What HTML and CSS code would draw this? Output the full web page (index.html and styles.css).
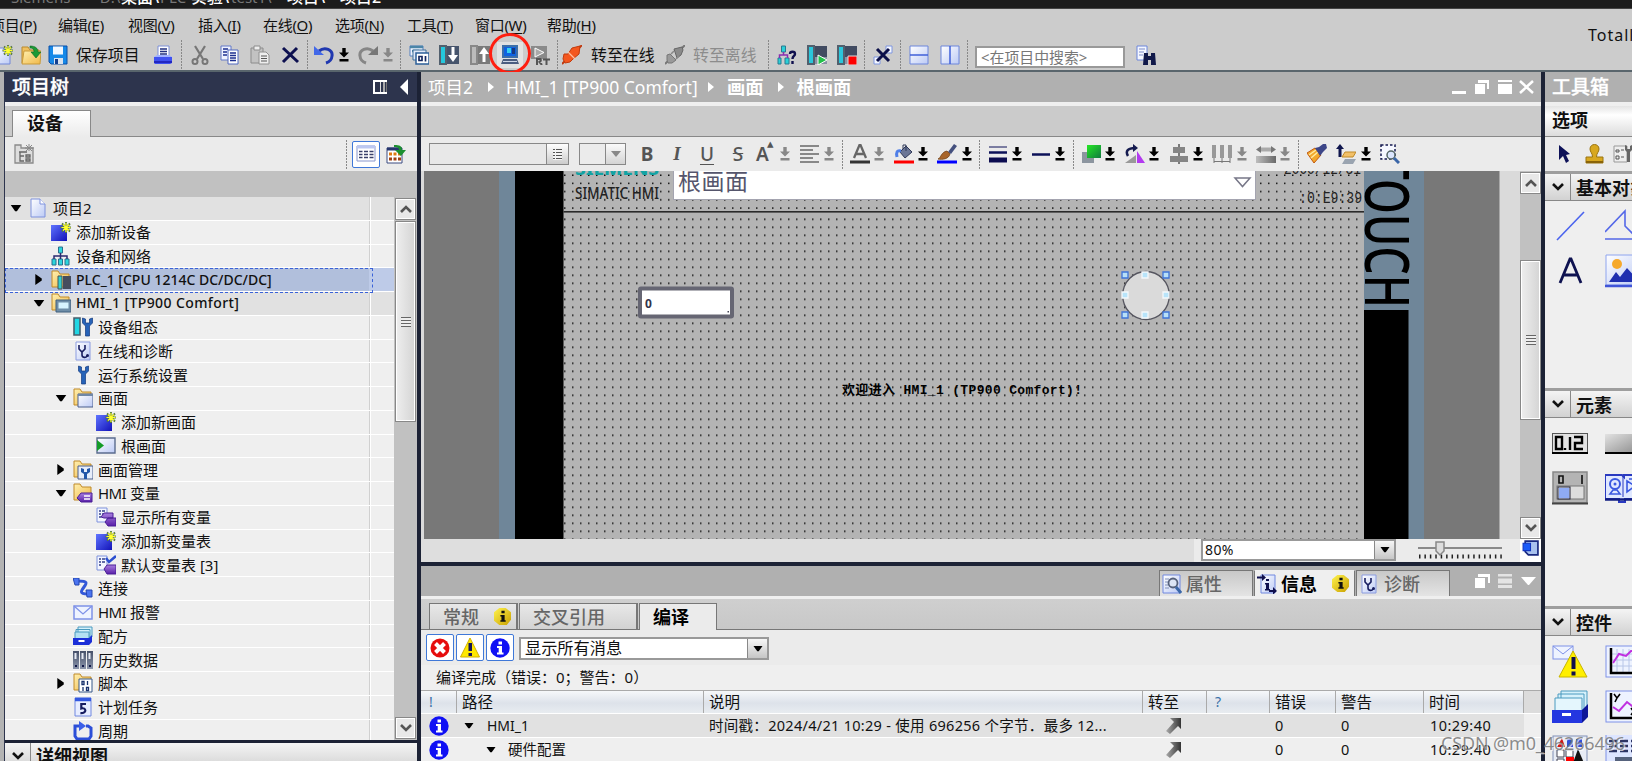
FILE: index.html
```html
<!DOCTYPE html>
<html lang="zh-CN">
<head>
<meta charset="utf-8">
<title>项目2</title>
<link rel="stylesheet" href="styles.css">
</head>
<body>
<svg class="sprite" width="0" height="0" aria-hidden="true">
<defs>
<linearGradient id="gBlue" x1="0" y1="0" x2="1" y2="1"><stop offset="0" stop-color="#5f74ff"/><stop offset="1" stop-color="#1212b8"/></linearGradient>
<linearGradient id="gPaper" x1="0" y1="0" x2="1" y2="1"><stop offset="0" stop-color="#fff"/><stop offset="1" stop-color="#bccaf5"/></linearGradient>
<linearGradient id="gFold" x1="0" y1="0" x2="1" y2="1"><stop offset="0" stop-color="#fff0b0"/><stop offset="1" stop-color="#f0b848"/></linearGradient>
<linearGradient id="gSteel" x1="0" y1="0" x2="0" y2="1"><stop offset="0" stop-color="#47516a"/><stop offset="1" stop-color="#8b95aa"/></linearGradient>
<linearGradient id="gGrey" x1="0" y1="0" x2="1" y2="1"><stop offset="0" stop-color="#e2e2e2"/><stop offset="1" stop-color="#8a8a8a"/></linearGradient>
<linearGradient id="gGreen" x1="0" y1="0" x2="1" y2="1"><stop offset="0" stop-color="#25e825"/><stop offset="1" stop-color="#127a40"/></linearGradient>
<linearGradient id="gPurple" x1="0" y1="0" x2="0" y2="1"><stop offset="0" stop-color="#a880e0"/><stop offset="1" stop-color="#5a1fa8"/></linearGradient>
<linearGradient id="gGold" x1="0" y1="0" x2="1" y2="1"><stop offset="0" stop-color="#fff34d"/><stop offset="1" stop-color="#c9a000"/></linearGradient>
<linearGradient id="gArrow" x1="0" y1="0" x2="1" y2="0"><stop offset="0" stop-color="#aaa"/><stop offset="1" stop-color="#333"/></linearGradient>
</defs>
<symbol id="spark" viewBox="0 0 20 20"><path d="M15 0v11M9.5 5.5h11M11 1.5l8 8M19 1.5l-8 8" stroke="#52763f" stroke-width="1.8"/><path d="M15 1v9M10.500 5.500h9M12 2.500l6 6M18 2.500l-6 6" stroke="#ffff30" stroke-width="1.200"/></symbol>
<symbol id="new" viewBox="0 0 20 20"><path d="M1 3h9l7 7v9H1z" fill="url(#gPaper)" stroke="#7388d8"/><use href="#spark"/></symbol>
<symbol id="open" viewBox="0 0 20 20"><path d="M1 2h6l2 3h9v13H1z" fill="#f0c060" stroke="#b98a2e"/><path d="M3 6h17l-1 13H1z" fill="url(#gFold)" stroke="#c99a3a"/><path d="M9 1c5 0 8 2 8 6h3l-5 6-5-6h3c0-3-1-4-4-4z" fill="#1d9a35" stroke="#0b6a22" stroke-width=".6"/></symbol>
<symbol id="save" viewBox="0 0 20 20"><path d="M1 1h18v18H3l-2-2z" fill="#1689e8" stroke="#0b4fa8"/><path d="M5 1.500h10v8H5z" fill="#f2f8ff"/><path d="M6 13h9v6H6z" fill="#d9e2ee"/><path d="M7 14h3v5H7z" fill="#123f90"/></symbol>
<symbol id="print" viewBox="0 0 20 20"><path d="M5 1h11v12H5z" fill="#fff" stroke="#7d90d8"/><path d="M7 4h7M7 6.500h7M7 9h7" stroke="#223080" stroke-width="1.300"/><path d="M1 12h18v6l-2 1H2l-1-1z" fill="#3f51f0"/><path d="M1 12l3-2h12l3 2z" fill="#9fb0ff"/><path d="M1 17h18" stroke="#1a1ab0" stroke-width="1.500"/></symbol>
<symbol id="cut" viewBox="0 0 20 20"><path d="M5 1l8 13M15 1L7 14" stroke="#777" stroke-width="2.200"/><circle cx="5" cy="16.500" r="2.500" fill="none" stroke="#777" stroke-width="2"/><circle cx="15" cy="16.500" r="2.500" fill="none" stroke="#777" stroke-width="2"/></symbol>
<symbol id="copy" viewBox="0 0 20 20"><path d="M1 1h10v14H1z" fill="#eef2ff" stroke="#6378c8"/><path d="M8 5h10v14H8z" fill="#fff" stroke="#5068c0"/><path d="M3 4h5M3 7h4M3 10h4M10 8h6M10 10.500h6M10 13h6M10 15.500h6" stroke="#1c2f90" stroke-width="1.300"/></symbol>
<symbol id="paste" viewBox="0 0 20 20"><path d="M1 3h12v15H1z" fill="#c2c2c2" stroke="#8c8c8c"/><path d="M4 1h6v4H4z" fill="#eee" stroke="#8c8c8c"/><path d="M9 7h7l3 3v9H9z" fill="#eee" stroke="#909090"/><path d="M11 11h6M11 13.500h6M11 16h6" stroke="#555" stroke-width="1.200"/></symbol>
<symbol id="del" viewBox="0 0 20 20"><path d="M3 3l15 14M17 3L3 17" stroke="#0d1050" stroke-width="3"/></symbol>
<symbol id="undo" viewBox="0 0 20 20"><path d="M5 6c6-5 14-1 13 5-.3 4-3 6-6 7" fill="none" stroke="#2038b0" stroke-width="3"/><path d="M0 1v9h10z" fill="#4268e8"/></symbol>
<symbol id="redo" viewBox="0 0 20 20"><path d="M15 6C9 1 1 5 2 11c.3 4 3 6 6 7" fill="none" stroke="#868686" stroke-width="3"/><path d="M20 1v9H10z" fill="#777"/></symbol>
<symbol id="dd" viewBox="0 0 10 14"><path d="M3.300 0h3.400v4.500H10L5 9.500 0 4.500h3.300zM0.500 11h9v2.500h-9z" fill="currentColor"/></symbol>
<symbol id="compile" viewBox="0 0 20 20"><path d="M1 1h13v10H1z" fill="#eef3ff" stroke="#5580c0"/><path d="M1 2h13M3 6h7" stroke="#4b86a8" stroke-width="2.500"/><path d="M4 5h13v10H4z" fill="#dfe8f8" stroke="#3f6f98"/><path d="M7 8h13v11H7z" fill="#fff" stroke="#2c5f98" stroke-width="1.500"/><path d="M10 11.500h3v4h-3zM16.500 11v5.500" fill="none" stroke="#142860" stroke-width="1.700"/></symbol>
<symbol id="dl" viewBox="0 0 20 20"><path d="M1 1h6v18H1z" fill="#24c8dd" stroke="#52606e" stroke-width="2"/><path d="M8 1h12v18H8z" fill="#46546c"/><path d="M14 2v10" stroke="#fff" stroke-width="3"/><path d="M9 10h10l-5 7z" fill="#fff"/></symbol>
<symbol id="ul" viewBox="0 0 20 20"><path d="M1 1h6v18H1z" fill="#bbb" stroke="#888" stroke-width="2"/><path d="M8 1h12v18H8z" fill="#7a7a7a"/><path d="M14 8v9" stroke="#fff" stroke-width="3"/><path d="M9 9h10l-5-7z" fill="#fff"/></symbol>
<symbol id="sim" viewBox="0 0 20 20"><path d="M2 0h16v13H2z" fill="#3d6fa8"/><path d="M4 2h12v9H4z" fill="#0f62e0"/><path d="M7 3h4v5H7z" fill="#37d0f0"/><path d="M12 3h3v6h-3z" fill="#173a80"/><path d="M3 14h14l2 5H1z" fill="#4b5d80"/><path d="M3 16.500h14" stroke="#cdd6e6"/></symbol>
<symbol id="rt" viewBox="0 0 20 20"><path d="M1 1h16v13H1z" fill="#8a8a8a"/><path d="M5 3l9 4.500L5 12z" fill="#aaa" stroke="#fff"/><path d="M7 20v-6h3.500q1 2-1 3l2.500 3M13 14.500h7M16.500 14v6" fill="none" stroke="#555" stroke-width="2"/></symbol>
<symbol id="plug" viewBox="0 0 20 20"><path d="M0 19l5-5M15 5l5-5" stroke="#c03a10" stroke-width="2"/><path d="M2 9l4 0 4-6 8-2-1 8-6 5-3 3-5 1-2-4z" fill="#f4571e" stroke="#c23a0c"/><path d="M6 7l7 7" stroke="#ffc0a0" stroke-width="1.300"/></symbol>
<symbol id="plugoff" viewBox="0 0 20 20"><path d="M0 19l4-4M15 5l5-5" stroke="#777" stroke-width="2"/><path d="M2 10l3-1 6 6-4 3H3l-1-3z" fill="#9a9a9a" stroke="#777"/><path d="M9 4l8-2 1 3-2 5-4 3z" fill="#8a8a8a" stroke="#666"/><path d="M6 9l3-3M11 14l3-3" stroke="#888" stroke-width="1.500"/></symbol>
<symbol id="diag" viewBox="0 0 20 20"><path d="M4.500 1h4v6h-4zM1 13h3v6H1zM8 13h4v6H8z" fill="#2bd0d8" stroke="#287a90"/><path d="M6.500 7v3M2.500 13v-3h8v3" stroke="#8a2fb0" fill="none" stroke-width="1.500"/><path d="M13 9c0-3 5-3 5 0 0 2-2.500 2-2.500 5M15.500 16v3" fill="none" stroke="#10104e" stroke-width="2.400"/></symbol>
<symbol id="cpu" viewBox="0 0 20 20"><path d="M1 1h6v18H1z" fill="#2bc6da" stroke="#52606e" stroke-width="2"/><path d="M8 1h12v18H8z" fill="#414b61"/><path d="M8 12h12v7H8z" fill="#8993a5"/></symbol>
<symbol id="start" viewBox="0 0 20 20"><use href="#cpu"/><path d="M11 10l9 5-9 5z" fill="#22c04a" stroke="#fff"/></symbol>
<symbol id="stop" viewBox="0 0 20 20"><use href="#cpu"/><path d="M11 11h9v9h-9z" fill="#f00" stroke="#ddd"/></symbol>
<symbol id="cross" viewBox="0 0 20 20"><path d="M13 1h6v7h-6zM1 12h6v7H1z" fill="#f4f7ff" stroke="#7f96e0"/><path d="M4 4l12 12M16 4L4 16" stroke="#0b0f48" stroke-width="3"/></symbol>
<symbol id="hs" viewBox="0 0 20 20"><path d="M1 1h18v18H1z" fill="url(#gPaper)" stroke="#6d86dc"/><path d="M1 10h18" stroke="#3f5fd8" stroke-width="1.500"/></symbol>
<symbol id="vs" viewBox="0 0 20 20"><path d="M1 1h18v18H1z" fill="url(#gPaper)" stroke="#6d86dc"/><path d="M10 1v18" stroke="#3f5fd8" stroke-width="1.500"/></symbol>
<symbol id="find" viewBox="0 0 20 20"><path d="M1 1h10v14H1z" fill="#f4f7ff" stroke="#6d86dc"/><path d="M3 4h6M3 7h5M3 10h4" stroke="#7a8ac8"/><path d="M8 8h4v3h3V8h4l1 12h-5v-5h-3v5H7z" fill="#11194a"/></symbol>
<symbol id="newgrey" viewBox="0 0 20 20"><path d="M1 4V1h6v3h12v15H1z" fill="#ddd" stroke="#8a8a8a" stroke-width="1.300"/><path d="M5 8h8M6 8v9h4M6 12h4M12 11h4v2h-4zM12 15h4v2h-4z" stroke="#666" stroke-width="1.300" fill="none"/><path d="M15 0v7M11 4h9M12 1l6 6M18 1l-6 6" stroke="#888"/></symbol>
<symbol id="list" viewBox="0 0 20 20"><path d="M1 2h18v15H1z" fill="#fff" stroke="#8896cc"/><path d="M1 3h18" stroke="#bcc8f2" stroke-width="3"/><path d="M3 7.500h3.500m1.500 0h4m1.500 0h4M3 10.500h3.500m1.500 0h4m1.500 0h4M3 13.500h3.500m1.500 0h4m1.500 0h4" stroke="#39406a" stroke-width="1.400"/></symbol>
<symbol id="cal" viewBox="0 0 20 20"><path d="M1 4h15v15H1z" fill="#fff" stroke="#3a4a80"/><path d="M1 5h15" stroke="#26366e" stroke-width="3"/><path d="M3 10h3m1.500 0h3m1.500 0h3" stroke="#e07a10" stroke-width="3"/><path d="M3 15h3m1.500 0h3m1.500 0h3" stroke="#a04010" stroke-width="3"/><path d="M8 1c6 0 8 1 8 5h4l-5 6-6-6h4c0-2-1-3-5-3z" fill="#1c9030"/></symbol>
<symbol id="page" viewBox="0 0 20 20"><path d="M3 1h9l5 5v13H3z" fill="url(#gPaper)" stroke="#7f92dd"/><path d="M12 1v5h5" fill="#fff" stroke="#7f92dd"/></symbol>
<symbol id="add" viewBox="0 0 20 20"><path d="M0 3h16v16H0z" fill="url(#gBlue)"/><use href="#spark"/></symbol>
<symbol id="net" viewBox="0 0 20 20"><path d="M7.500 1h4v6h-4zM1 13h4v6H1zM7.500 13h4v6h-4zM14 13h4v6h-4z" fill="#2bd6dc" stroke="#2a6f8c"/><path d="M9.500 7v6M3 13v-3h13v3" stroke="#2a2a70" fill="none" stroke-width="1.500"/></symbol>
<symbol id="fold" viewBox="0 0 20 20"><path d="M1 17V1h6l2 3h9v13z" fill="url(#gFold)" stroke="#c08a28"/></symbol>
<symbol id="plc" viewBox="0 0 20 20"><use href="#fold"/><path d="M7 6h4v13H7z" fill="#32cfd0" stroke="#455"/><path d="M12 6h8v13h-8z" fill="#454d5e"/></symbol>
<symbol id="hmi" viewBox="0 0 20 20"><use href="#fold"/><path d="M5 7h15v12H5z" fill="#6f8ea8" stroke="#41607e"/><path d="M7.500 9.500h10v6h-10z" fill="#d7f4ff"/></symbol>
<symbol id="wrench" viewBox="0 0 20 20"><path d="M5.500 1v5l3 3v10h4V9l3-3V1l-3 1v4h-4V2z" fill="#2763b8" stroke="#123a80" stroke-width=".7"/></symbol>
<symbol id="cfg" viewBox="0 0 20 20"><path d="M1 1h6v17H1z" fill="#20d6e4" stroke="#47606e" stroke-width="1.600"/><use href="#wrench" x="4"/></symbol>
<symbol id="steth" viewBox="0 0 20 20"><path d="M3 1h14v18H3z" fill="url(#gPaper)" stroke="#8b9ce0"/><path d="M6 4v4l3 3 3-3V4M9 11v3c0 3 4 3 5 1" fill="none" stroke="#171d60" stroke-width="1.600"/><circle cx="14.500" cy="14.500" r="1.500" fill="#171d60"/></symbol>
<symbol id="fscr" viewBox="0 0 20 20"><use href="#fold"/><path d="M5 6h15v13H5z" fill="url(#gPaper)" stroke="#4a5f8c"/><path d="M5 7h15" stroke="#7088a8" stroke-width="2"/></symbol>
<symbol id="root" viewBox="0 0 20 20"><path d="M1 2h18v15H1z" fill="url(#gPaper)" stroke="#5b6c8e" stroke-width="1.400"/><path d="M1 4l7 5.500L1 15z" fill="#149c28"/></symbol>
<symbol id="fwr" viewBox="0 0 20 20"><use href="#fold"/><path d="M5 6h15v13H5z" fill="#e6edfb" stroke="#4a5f8c"/><path d="M8 8v4l3 2v5h3v-5l3-2V8l-3 1v3h-3V9z" fill="#2155a8"/></symbol>
<symbol id="ftag" viewBox="0 0 20 20"><use href="#fold"/><path d="M4 15l4-5h11v9H8z" fill="url(#gPurple)" stroke="#4b1f96"/><path d="M11 13h6M11 16h6" stroke="#fff" stroke-width="1.400"/></symbol>
<symbol id="tags" viewBox="0 0 20 20"><path d="M1 1h10v14H1z" fill="#f3f6ff" stroke="#7f92dd"/><path d="M3 4h2m1 0h3M3 7h2m1 0h3M3 10h2" stroke="#35408a" stroke-width="1.400"/><path d="M5 10l3-4h9v5H8zM9 15l3-4h8v8h-8z" fill="url(#gPurple)" stroke="#4b1f96"/></symbol>
<symbol id="tagc" viewBox="0 0 20 20"><path d="M1 1h10v14H1z" fill="#f3f6ff" stroke="#7f92dd"/><path d="M3 4h2m1 0h3M3 7h2m1 0h3M3 10h2" stroke="#35408a" stroke-width="1.400"/><path d="M10 3l3 4 7-6" fill="none" stroke="#2b4fd0" stroke-width="2.500"/><path d="M8 14l3-4h9v9h-9z" fill="url(#gPurple)" stroke="#4b1f96"/></symbol>
<symbol id="conn" viewBox="0 0 20 20"><path d="M5 3c10 0 9 2 6 6s-5 7 4 7" fill="none" stroke="#3358d8" stroke-width="3"/><path d="M0 0h6v7H2zM13 12h6v7h-5z" fill="#4b74f0" stroke="#2546b0"/></symbol>
<symbol id="mail" viewBox="0 0 20 20"><path d="M1 4h18v13H1z" fill="#eef3ff" stroke="#7f92e8" stroke-width="1.500"/><path d="M1 4l9 8 9-8" fill="none" stroke="#7f92e8" stroke-width="1.300"/></symbol>
<symbol id="recipe" viewBox="0 0 20 20"><path d="M5 1h14v10H5zM3 3.500h14V13H3z" fill="#d6f1fb" stroke="#4a9abf"/><path d="M2 6h14v7H2z" fill="#b4e0f2" stroke="#4a9abf"/><path d="M0 12h16l3-3v7l-3 3H0z" fill="#1c2fd8"/><path d="M5.500 14h6v2h-6z" fill="#fff"/></symbol>
<symbol id="hist" viewBox="0 0 20 20"><path d="M0 1h6v18H0zM7 1h6v18H7zM14 1h6v18h-6z" fill="url(#gSteel)"/><path d="M1.500 3h2v6h-2zM8.500 3h2v6h-2zM15.500 3h2v6h-2z" fill="#e7ebf5"/><path d="M2 15h2v2H2zM9 15h2v2H9zM16 15h2v2h-2z" fill="#111848"/></symbol>
<symbol id="script" viewBox="0 0 20 20"><use href="#fold"/><path d="M6 6h13v13H6z" fill="#fff" stroke="#36598a"/><path d="M9 8.500h2v3H9zM14.500 8v4M10 14v4M13.500 14.500h2v3h-2z" fill="none" stroke="#17306a" stroke-width="1.300"/></symbol>
<symbol id="task" viewBox="0 0 20 20"><path d="M2 1h16v18H2z" fill="#e7edff" stroke="#7088e0"/><path d="M2 2.500h16" stroke="#3358e0" stroke-width="3.500"/><path d="M13 7H8.300v4.500c5-1.500 6 5-.9 4.600" fill="none" stroke="#171d60" stroke-width="2.200"/></symbol>
<symbol id="cycle" viewBox="0 0 20 20"><path d="M6 5H2v10l2 3h12l2-3V7l-3-2h-2" fill="none" stroke="#2c4fd8" stroke-width="3"/><path d="M6 0l7 5-7 5z" fill="#3b5fe8"/></symbol>
<symbol id="info" viewBox="0 0 20 20"><circle cx="10" cy="10" r="9.700" fill="#1010f4"/><path d="M8.500 3.500h3.500v3H8.500zM7 8h5v6.500h1.500v2H7v-2h1.700V10H7z" fill="#fff"/></symbol>
<symbol id="err" viewBox="0 0 20 20"><circle cx="10" cy="10" r="9.500" fill="#e60d0d"/><path d="M5.500 5.500l9 9M14.500 5.500l-9 9" stroke="#fff" stroke-width="4"/></symbol>
<symbol id="warn" viewBox="0 0 20 20"><path d="M10 0l9.500 19H.5z" fill="#ffe800" stroke="#d0b000"/><path d="M8.500 5h3.500v8H8.500zM8.500 15h3.500v3H8.500z" fill="#14145a"/></symbol>
<symbol id="yinfo" viewBox="0 0 16 16"><path d="M5 0h6l5 4v7l-4 5H5l-5-4V4z" fill="url(#gGold)"/><path d="M7 2.500h3v2.500H7zM6 6.500h4v5h1v1.500H6v-1.500h1V8H6z" fill="#111"/></symbol>
<symbol id="goto" viewBox="0 0 16 16"><path d="M5 0h11v11l-3-3-8 8-4-3 8-9z" fill="url(#gArrow)"/></symbol>
<symbol id="align" viewBox="0 0 20 20"><path d="M0 2h19M0 6h13M0 10h19M0 14h13M0 18h19" stroke="#888" stroke-width="2"/></symbol>
<symbol id="fontc" viewBox="0 0 20 20"><path d="M4 14l5.500-13h1L16 14M6 10h8" fill="none" stroke="#666" stroke-width="2.300"/><path d="M0 16.500h20v3H0z" fill="#333"/></symbol>
<symbol id="fill" viewBox="0 0 20 20"><path d="M6 8l6-6 6 6-7 6z" fill="#6b7696" stroke="#2f3858"/><path d="M9 5V1h3v6" fill="none" stroke="#2f3858"/><path d="M7 7C3 6 2 8 3 13" fill="none" stroke="#4f7fe8" stroke-width="3"/><path d="M0 16.500h20v3H0z" fill="red"/></symbol>
<symbol id="brush" viewBox="0 0 20 20"><path d="M11 8l6-8 3 2-6 8z" fill="#44507e"/><path d="M1 15c3-1 3-7 9-8l3 3c-1 5-8 6-12 5z" fill="#a8652a" stroke="#6a3a10" stroke-width=".7"/><path d="M0 16.500h20v3H0z" fill="#00f"/></symbol>
<symbol id="lines" viewBox="0 0 20 20"><path d="M1 3h18" stroke="#0c1158"/><path d="M1 8.500h18" stroke="#0c1158" stroke-width="2.500"/><path d="M1 16h18" stroke="#0c0c50" stroke-width="5"/></symbol>
<symbol id="line1" viewBox="0 0 20 20"><path d="M1 10.500h18" stroke="#0c1158" stroke-width="2.500"/></symbol>
<symbol id="layers" viewBox="0 0 20 20"><path d="M0 8h12v11H0z" fill="#8c959f"/><path d="M5 1h14v13H5z" fill="url(#gGreen)"/></symbol>
<symbol id="rot" viewBox="0 0 20 20"><path d="M0 19l11-8v8z" fill="#999"/><path d="M12 19V7l8 12z" fill="#b33af0"/><path d="M3 12C0 7 3 4 10 4" fill="none" stroke="#161c50" stroke-width="2.500"/><path d="M8 0l5 4-5 4z" fill="#161c50"/></symbol>
<symbol id="alc" viewBox="0 0 20 20"><path d="M10 0v20" stroke="#555" stroke-width="1.500"/><path d="M4 3h12v6H4zM1 12h18v6H1z" fill="#858585"/></symbol>
<symbol id="dist" viewBox="0 0 20 20"><path d="M0 1h4v13H0zM8 1h4v13H8zM16 1h4v13h-4z" fill="#999"/><path d="M2 14v5m8-5v5m8-5v5M2 17.500h16" stroke="#777" fill="none"/></symbol>
<symbol id="wid" viewBox="0 0 20 20"><path d="M0 12h20v7H0z" fill="url(#gArrow)" opacity=".7"/><path d="M5 5.500h10" stroke="#aaa" stroke-width="4"/><path d="M0 5.500L5 2v7zM20 5.500L15 2v7z" fill="#777"/></symbol>
<symbol id="broom" viewBox="0 0 20 20"><path d="M0 9l8-5 6 7-7 8z" fill="#f3a82c" stroke="#c25a10"/><path d="M2 11l7-5M4 14l7-6" stroke="#ffeaa0" stroke-width="1.500"/><path d="M8 4l4-1 4-3h3l1 4-4 4-3 4z" fill="#3d4688"/></symbol>
<symbol id="lay2" viewBox="0 0 20 20"><path d="M4 13V3" stroke="#10164e" stroke-width="3"/><path d="M0 5l4-5 4 5z" fill="#10164e"/><path d="M9 8h11l-3 5H6z" fill="#f2c068" stroke="#c08a28"/><path d="M9 15h11l-3 5H6z" fill="#9aa4b0"/></symbol>
<symbol id="zoomsel" viewBox="0 0 20 20"><path d="M1 1h14v14H1z" fill="#f5f7ff" stroke="#141a50" stroke-width="1.500" stroke-dasharray="2.500 2"/><circle cx="11" cy="11" r="4" fill="#dbe6ff" stroke="#566" stroke-width="1.500"/><path d="M14 14l5 5" stroke="#3a66a8" stroke-width="3"/></symbol>
<symbol id="cursor" viewBox="0 0 20 20"><path d="M5 1l11 9-4 1 3 6-3 2-3-7-4 4z" fill="#0d1158"/></symbol>
<symbol id="stamp" viewBox="0 0 20 20"><path d="M6 5c0-6 9-6 9 0 0 3-2.500 4-2.500 8H19v6H2v-6h6.500C8.500 9 6 8 6 5z" fill="#d8a820" stroke="#9a7410"/><path d="M2 18h17" stroke="#8a6408" stroke-width="2"/></symbol>
<symbol id="toolg" viewBox="0 0 20 20"><path d="M1 2h13v16H1z" fill="#eee" stroke="#999"/><path d="M3 6h3v2H3zM3 12h3v3H3zM8 6h3M8 13h3" stroke="#555" fill="none"/><path d="M12 1v5l2 2v10h3V8l2-2V1l-2 1v3h-3V2z" fill="#666"/></symbol>
<symbol id="prop" viewBox="0 0 20 20"><path d="M1 1h17v18H1z" fill="url(#gPaper)" stroke="#7088e0"/><path d="M3 5h4M3 8h3M3 11h3M3 14h4" stroke="#8090b8"/><circle cx="11" cy="9" r="4.500" fill="#dce4f5" stroke="#55607a" stroke-width="1.800"/><path d="M14 13l5 6" stroke="#3a66a8" stroke-width="3"/></symbol>
<symbol id="inf2" viewBox="0 0 20 20"><path d="M4 1h14v18H4z" fill="url(#gPaper)" stroke="#7088e0"/><path d="M9 5h3v2H9zM8 9h4v6h1v1.500H8V15h1v-4.500H8z" fill="#10104e"/><path d="M0 3.500h6M12 17h7" stroke="#10104e" stroke-width="2"/><path d="M5 0l4 3.500L5 7zM16 13l4 4-4 3.500z" fill="#10104e"/></symbol>
<symbol id="tri-d" viewBox="0 0 12 8"><path d="M0 0h12L7 7H5z" fill="#000"/></symbol>
<symbol id="tri-r" viewBox="0 0 8 12"><path d="M0 0v12l7-5V5z" fill="#000"/></symbol>
<symbol id="chev" viewBox="0 0 12 8"><path d="M1 1l5 5 5-5" fill="none" stroke="currentColor" stroke-width="2.600"/></symbol>
</svg>

<div class="app">
  <div class="titlebar"><span class="dim">Siemens</span><span class="dim dash">- D:\</span><span class="t0">桌面\</span><span class="dim t1">PLC</span><span class="t2">实验\</span><span class="dim t3">test1\</span><span class="t4">项目\</span><span>项目2</span></div>

  <header class="top">
    <nav class="menu">
      <span>项目(<u>P</u>)</span><span>编辑(<u>E</u>)</span><span>视图(<u>V</u>)</span><span>插入(<u>I</u>)</span><span>在线(<u>O</u>)</span><span>选项(<u>N</u>)</span><span>工具(<u>T</u>)</span><span>窗口(<u>W</u>)</span><span>帮助(<u>H</u>)</span>
    </nav>
    <div class="brand">Totally</div>
    <div class="bar main">
      <svg class="ic first"><use href="#new"/></svg><svg class="ic m8"><use href="#open"/></svg><svg class="ic m7"><use href="#save"/></svg><span class="lbl save m8">保存项目</span><svg class="ic m8"><use href="#print"/></svg><i class="sep m8"></i><svg class="ic m8"><use href="#cut"/></svg><svg class="ic m10"><use href="#copy"/></svg><svg class="ic m10"><use href="#paste"/></svg><svg class="ic m10"><use href="#del"/></svg><i class="sep m7"></i><svg class="ic m6"><use href="#undo"/></svg><svg class="dd m5"><use href="#dd"/></svg><svg class="ic m9"><use href="#redo"/></svg><svg class="dd off m5"><use href="#dd"/></svg><i class="sep m7"></i><svg class="ic m8"><use href="#compile"/></svg><svg class="ic m10"><use href="#dl"/></svg><svg class="ic m11"><use href="#ul"/></svg><span class="hot m10"><svg class="ic"><use href="#sim"/></svg><i class="ring"></i></span><svg class="ic m10"><use href="#rt"/></svg><i class="sep m7"></i><svg class="ic m4"><use href="#plug"/></svg><span class="lbl on m9">转至在线</span><svg class="ic m10"><use href="#plugoff"/></svg><span class="lbl offl m8">转至离线</span><i class="sep m10"></i><svg class="ic m8"><use href="#diag"/></svg><svg class="ic m10"><use href="#start"/></svg><svg class="ic m10"><use href="#stop"/></svg><i class="sep m7"></i><svg class="ic m8"><use href="#cross"/></svg><i class="sep m7"></i><svg class="ic m8"><use href="#hs"/></svg><svg class="ic m11"><use href="#vs"/></svg><i class="sep m7"></i><span class="search m7">&lt;在项目中搜索&gt;</span><svg class="ic m11"><use href="#find"/></svg>
    </div>
  </header>

  <main class="work">
    <div class="edge"></div>

    <aside class="tree-panel">
      <div class="phead navy"><b>项目树</b><span class="pcol"></span><span class="pleft"></span></div>
      <div class="hl"></div>
      <div class="tabs"><span class="tab">设备</span></div>
      <div class="bar sub"><svg class="ic m9"><use href="#newgrey"/></svg><i class="sep push"></i><span class="frame"><svg class="ic"><use href="#list"/></svg></span><svg class="ic m6"><use href="#cal"/></svg></div>
      <div class="blank"></div>
      <div class="treebox">
        <div class="tree">
          <div class="row l0 hd"><div><svg class="ar d"><use href="#tri-d"/></svg><svg class="ic"><use href="#page"/></svg><span>项目2</span></div></div>
          <div class="row l1"><div><i class="ar"></i><svg class="ic"><use href="#add"/></svg><span>添加新设备</span></div></div>
          <div class="row l1"><div><i class="ar"></i><svg class="ic"><use href="#net"/></svg><span>设备和网络</span></div></div>
          <div class="row l1 sel"><div><svg class="ar r"><use href="#tri-r"/></svg><svg class="ic"><use href="#plc"/></svg><span class="en plc">PLC_1 [CPU 1214C DC/DC/DC]</span></div></div>
          <div class="row l1 hd"><div><svg class="ar d"><use href="#tri-d"/></svg><svg class="ic"><use href="#hmi"/></svg><span class="en hmi">HMI_1 [TP900 Comfort]</span></div></div>
          <div class="row l2"><div><i class="ar"></i><svg class="ic"><use href="#cfg"/></svg><span>设备组态</span></div></div>
          <div class="row l2"><div><i class="ar"></i><svg class="ic"><use href="#steth"/></svg><span>在线和诊断</span></div></div>
          <div class="row l2"><div><i class="ar"></i><svg class="ic"><use href="#wrench"/></svg><span>运行系统设置</span></div></div>
          <div class="row l2"><div><svg class="ar d"><use href="#tri-d"/></svg><svg class="ic"><use href="#fscr"/></svg><span>画面</span></div></div>
          <div class="row l3"><div><i class="ar"></i><svg class="ic"><use href="#add"/></svg><span>添加新画面</span></div></div>
          <div class="row l3"><div><i class="ar"></i><svg class="ic"><use href="#root"/></svg><span>根画面</span></div></div>
          <div class="row l2"><div><svg class="ar r"><use href="#tri-r"/></svg><svg class="ic"><use href="#fwr"/></svg><span>画面管理</span></div></div>
          <div class="row l2"><div><svg class="ar d"><use href="#tri-d"/></svg><svg class="ic"><use href="#ftag"/></svg><span><em>HMI</em> 变量</span></div></div>
          <div class="row l3"><div><i class="ar"></i><svg class="ic"><use href="#tags"/></svg><span>显示所有变量</span></div></div>
          <div class="row l3"><div><i class="ar"></i><svg class="ic"><use href="#add"/></svg><span>添加新变量表</span></div></div>
          <div class="row l3"><div><i class="ar"></i><svg class="ic"><use href="#tagc"/></svg><span>默认变量表 [3]</span></div></div>
          <div class="row l2"><div><i class="ar"></i><svg class="ic"><use href="#conn"/></svg><span>连接</span></div></div>
          <div class="row l2"><div><i class="ar"></i><svg class="ic"><use href="#mail"/></svg><span><em>HMI</em> 报警</span></div></div>
          <div class="row l2"><div><i class="ar"></i><svg class="ic"><use href="#recipe"/></svg><span>配方</span></div></div>
          <div class="row l2"><div><i class="ar"></i><svg class="ic"><use href="#hist"/></svg><span>历史数据</span></div></div>
          <div class="row l2"><div><svg class="ar r"><use href="#tri-r"/></svg><svg class="ic"><use href="#script"/></svg><span>脚本</span></div></div>
          <div class="row l2"><div><i class="ar"></i><svg class="ic"><use href="#task"/></svg><span>计划任务</span></div></div>
          <div class="row l2"><div><i class="ar"></i><svg class="ic"><use href="#cycle"/></svg><span>周期</span></div></div>
        </div>
        <div class="sb sb-tree"><span class="sbtn"><svg class="chev up"><use href="#chev"/></svg></span><span class="thumb"><i></i></span><span class="sbtn end"><svg class="chev"><use href="#chev"/></svg></span></div>
      </div>
      <div class="dark3"></div>
      <div class="sect detail"><span class="sx"><svg class="chev"><use href="#chev"/></svg></span><b>详细视图</b></div>
    </aside>

    <div class="vdark"></div>

    <section class="center">
      <div class="phead grey crumbs"><span class="c1">项目2</span><i></i><span class="c2">HMI_1 [TP900 Comfort]</span><i></i><span class="c3">画面</span><i></i><span class="c3">根画面</span>
        <svg class="winbtn" viewBox="0 0 84 16"><path d="M0 12h14v3H0z" fill="#fff"/><path d="M23 5h10v10H23zM26 1h11v9h-2V4h-9z" fill="#fff"/><path d="M46 1h14v2H46zM46 5h14v10H46z" fill="#fff"/><path d="M68 2l13 12M81 2L68 14" stroke="#fff" stroke-width="2.500"/></svg>
      </div>
      <div class="hl"></div>
      <div class="strip"></div>
      <div class="bar fmt">
        <span class="fcombo m8"><i></i></span><span class="scombo m10"><i></i></span><b class="g m11">B</b><b class="g it m10">I</b><b class="g un m10">U</b><b class="g st m11">S</b><b class="g up m8">A<sup>▴</sup></b><svg class="dd off m4"><use href="#dd"/></svg><svg class="ic m10"><use href="#align"/></svg><svg class="dd off m4"><use href="#dd"/></svg><i class="sep m8"></i><svg class="ic m7"><use href="#fontc"/></svg><svg class="dd off m4"><use href="#dd"/></svg><svg class="ic m10"><use href="#fill"/></svg><svg class="dd m4"><use href="#dd"/></svg><svg class="ic m9"><use href="#brush"/></svg><svg class="dd m5"><use href="#dd"/></svg><i class="sep m7"></i><svg class="ic m8"><use href="#lines"/></svg><svg class="dd m4"><use href="#dd"/></svg><svg class="ic m9"><use href="#line1"/></svg><svg class="dd m4"><use href="#dd"/></svg><i class="sep m8"></i><svg class="ic m8"><use href="#layers"/></svg><svg class="dd m3"><use href="#dd"/></svg><svg class="ic m10"><use href="#rot"/></svg><svg class="dd m4"><use href="#dd"/></svg><svg class="ic m10"><use href="#alc"/></svg><svg class="dd m4"><use href="#dd"/></svg><svg class="ic m9"><use href="#dist"/></svg><svg class="dd off m5"><use href="#dd"/></svg><svg class="ic m9"><use href="#wid"/></svg><svg class="dd off m4"><use href="#dd"/></svg><i class="sep m8"></i><svg class="ic m8"><use href="#broom"/></svg><svg class="ic m9"><use href="#lay2"/></svg><svg class="dd m5"><use href="#dd"/></svg><svg class="ic m9"><use href="#zoomsel"/></svg>
      </div>
      <div class="canvas">
        <svg class="scene" viewBox="421 171 1099 368">
          <defs>
            <pattern id="dots" x="564" y="214.500" width="8" height="8" patternUnits="userSpaceOnUse"><rect x="0" y="4" width="1.500" height="1.500" fill="#111"/></pattern>
            <pattern id="dots2" x="564" y="170.500" width="8" height="8.200" patternUnits="userSpaceOnUse"><rect x="0" y="4" width="1.500" height="1.500" fill="#111"/></pattern>
          </defs>
          <rect x="421" y="171" width="1099" height="368" fill="#dadada"/>
          <rect x="424" y="171" width="1075.500" height="368" fill="#787878"/>
          <rect x="499" y="171" width="925" height="368" fill="#6f8699"/>
          <rect x="515" y="171" width="849" height="368" fill="#000"/>
          <rect x="1364" y="171" width="44.500" height="139" fill="#6f8699"/>
          <rect x="1364" y="310" width="44.500" height="229" fill="#000"/>
          <rect x="563.500" y="171" width="800.500" height="368" fill="#b4b4b4"/>
          <rect x="564" y="171" width="800" height="39" fill="url(#dots2)"/>
          <rect x="564" y="215" width="800" height="324" fill="url(#dots)"/>
          <rect x="563.500" y="211" width="800.500" height="1.600" fill="#2a2a2a"/>
          <text class="siemens" x="575" y="175" textLength="84" lengthAdjust="spacingAndGlyphs">SIEMENS</text>
          <text class="simatic" x="575" y="199" textLength="84" lengthAdjust="spacingAndGlyphs">SIMATIC HMI</text>
          <rect x="673.500" y="170" width="582" height="29.500" fill="#fff" stroke="#a4a4b0"/>
          <text class="rootname" x="678" y="189.500" textLength="70">根画面</text>
          <path d="M1235 178h15l-7.500 8.500z" fill="#fff" stroke="#777788" stroke-width="1.500"/>
          <text class="clock" x="1284" y="173.500" textLength="77" lengthAdjust="spacingAndGlyphs">2000/12/31</text>
          <text class="clock" x="1299" y="202.500" textLength="63" lengthAdjust="spacingAndGlyphs">:0:E9:39</text>
          <text class="touch" transform="translate(1364.500 155) rotate(90)" textLength="153" lengthAdjust="spacingAndGlyphs">TOUCH</text>
          <rect x="640" y="288.500" width="92" height="28" rx="1" fill="#fff" stroke="#666673" stroke-width="4"/>
          <text class="io" x="645" y="307.500">0</text><rect x="727.500" y="311" width="1.500" height="1.500" fill="#445"/>
          <ellipse cx="1146" cy="295.500" rx="23.300" ry="24" fill="#dadada" stroke="#55555f" stroke-width="1.300"/>
          <g fill="#b8e0f8" stroke="#3f74d8" stroke-width="1.300"><path d="M1122 272h6v6h-6zM1163 272h6v6h-6zM1122 312h6v6h-6zM1163 312h6v6h-6z"/></g>
          <g fill="#b8e4fa" stroke="#f4f8fa" stroke-width="1.300"><path d="M1142 272h6v6h-6zM1142 312h6v6h-6zM1122 292h6v6h-6zM1163 292h6v6h-6z"/></g>
          <text class="welcome" x="842" y="394" textLength="240" lengthAdjust="spacing">欢迎进入 HMI_1 (TP900 Comfort)!</text>
        </svg>
        <div class="sb sb-can"><span class="sbtn"><svg class="chev up"><use href="#chev"/></svg></span><span class="thumb"><i></i></span><span class="sbtn end"><svg class="chev"><use href="#chev"/></svg></span></div>
      </div>
      <div class="zoombar">
        <span class="zfill"></span>
        <span class="zcombo">80%<i><svg class="tri"><use href="#tri-d"/></svg></i></span>
        <svg class="slider" viewBox="0 0 84 22"><path d="M0 9h84" stroke="#8a8a8a" stroke-width="2"/><path d="M1 17.500h83" stroke="#222" stroke-width="4" stroke-dasharray="1.500 3.920"/><path d="M18 3h8v9l-4 4-4-4z" fill="#ddd" stroke="#888" stroke-width="1.500"/></svg>
        <span class="fit"><svg viewBox="0 0 16 16"><path d="M3 1h12v13H6l-3-3z" fill="#a9c2ee" stroke="#1a2a80" stroke-width="1.600"/><path d="M1 3h7v7H1z" fill="#1a5af8" stroke="#1236c0"/></svg></span>
      </div>
      <div class="dark4"></div>

      <div class="itabs">
        <span class="itab a"><svg class="ic"><use href="#prop"/></svg><b>属性</b></span>
        <span class="itab b act"><svg class="ic"><use href="#inf2"/></svg><b>信息</b><svg class="yi"><use href="#yinfo"/></svg></span>
        <span class="itab c"><svg class="ic"><use href="#steth"/></svg><b>诊断</b></span>
        <svg class="wb2" viewBox="0 0 62 16"><path d="M0 5h10v10H0zM3 1h12v9h-2V4H3z" fill="#fff"/><path d="M23 1h14v2.500H23zM23 5.500h14v5H23zM23 12h14v3H23z" fill="#e4e4e4"/><path d="M46 4h15l-7 8h-1z" fill="#fff"/></svg>
      </div>
      <div class="hl3"></div>
      <div class="stabs"><span class="stab s1">常规<svg class="yi"><use href="#yinfo"/></svg></span><span class="stab s2">交叉引用</span><span class="stab s3 act">编译</span></div>
      <div class="bar filt"><span class="frame"><svg class="ic"><use href="#err"/></svg></span><span class="frame"><svg class="ic"><use href="#warn"/></svg></span><span class="frame"><svg class="ic"><use href="#info"/></svg></span><span class="mcombo">显示所有消息<i><svg class="tri"><use href="#tri-d"/></svg></i></span></div>
      <div class="status">编译完成<span>（错误：0；警告：0）</span></div>
      <div class="tr th"><span class="ex">!</span><span>路径</span><span>说明</span><span>转至</span><span class="ex">?</span><span>错误</span><span>警告</span><span>时间</span><span></span></div>
      <div class="tr r1"><span class="ci"><svg class="ic"><use href="#info"/></svg></span><span class="p1"><svg class="tri"><use href="#tri-d"/></svg>HMI_1</span><span class="desc">时间戳：2024/4/21 10:29 - 使用 696256 个字节．最多 12...</span><span class="cg"><svg class="go"><use href="#goto"/></svg></span><span></span><span>0</span><span>0</span><span class="tm">10:29:40</span><span class="lst"></span></div>
      <div class="tr r2"><span class="ci"><svg class="ic"><use href="#info"/></svg></span><span class="p2"><svg class="tri"><use href="#tri-d"/></svg>硬件配置</span><span></span><span class="cg"><svg class="go"><use href="#goto"/></svg></span><span></span><span>0</span><span>0</span><span class="tm">10:29:40</span><span></span></div>
    </section>

    <div class="vdark"></div>

    <aside class="toolbox">
      <div class="phead grey tbh"><b>工具箱</b></div>
      <div class="hl"></div>
      <div class="opt">选项</div>
      <div class="bar tools"><svg class="ic"><use href="#cursor"/></svg><svg class="ic m10"><use href="#stamp"/></svg><svg class="ic m9"><use href="#toolg"/></svg></div>
      <div class="sect"><span class="sx"><svg class="chev"><use href="#chev"/></svg></span><b>基本对象</b></div>
      <div class="pal p-a">
        <svg viewBox="0 0 36 36"><path d="M5 32L32 4" stroke="#4a63ee" stroke-width="1.600"/></svg>
        <svg viewBox="0 0 36 36"><path d="M0 24L20 3v15l12 12M0 31h36" fill="none" stroke="#5468e8" stroke-width="1.600"/></svg>
        <svg viewBox="0 0 36 36"><path d="M8 30L18 6h1l10 24M12 22h13" fill="none" stroke="#0e1250" stroke-width="2.800"/></svg>
        <svg viewBox="0 0 36 36"><path d="M1 2h34v30H1z" fill="url(#gPaper)" stroke="#8ea4ee"/><circle cx="12" cy="11" r="5" fill="#f6a92c"/><path d="M4 29l7-10 4 5 7-9 13 14z" fill="#1f2fb0"/><path d="M0 33h36" stroke="#4055d8" stroke-width="2.500"/></svg>
      </div>
      <div class="sect"><span class="sx"><svg class="chev"><use href="#chev"/></svg></span><b>元素</b></div>
      <div class="pal p-b">
        <svg viewBox="0 0 36 34"><rect x=".5" y="7.500" width="35" height="20" fill="#e2e2e2" stroke="#555"/><path d="M0 27h36" stroke="#000" stroke-width="2"/><path d="M4 11h6v12H4zM13 22v2M18 11v13M22 11h8v6h-7v6h8" fill="none" stroke="#000" stroke-width="2.400"/></svg>
        <svg viewBox="0 0 36 34"><rect y="8" width="36" height="19" fill="url(#gGrey)"/><path d="M0 27h36" stroke="#000" stroke-width="2"/></svg>
        <svg viewBox="0 0 36 34"><rect x="1" y="1" width="34" height="31" fill="#b4b4b4" stroke="#888" stroke-width="1.500"/><path d="M0 32.500h36" stroke="#444" stroke-width="2"/><path d="M7 5h4v7H7zM30 4v9" stroke="#111" stroke-width="1.600" fill="none"/><rect x="5" y="15" width="27" height="13" fill="#ddd" stroke="#777"/><rect x="6" y="16" width="12" height="12" fill="url(#gPaper)" stroke="#223"/><rect x="7" y="17" width="10" height="10" fill="#8fabf4"/></svg>
        <svg viewBox="0 0 36 34"><path d="M0 4h17l2 2V4h17v24H20v3h-6v-3H0z" fill="#e0e8ff" stroke="#2a3ac0" stroke-width="2"/><path d="M18 4v22" stroke="#2a3ac0"/><circle cx="10" cy="13" r="5" fill="none" stroke="#3a58e0" stroke-width="2"/><circle cx="10" cy="13" r="1.500" fill="#3a58e0"/><path d="M5 23l3-4h4l3 4zM22 10l8 5-8 6zM24 8h8" fill="none" stroke="#3a58e0" stroke-width="1.600"/><path d="M0 28.500h36" stroke="#111c80" stroke-width="2.500"/></svg>
      </div>
      <div class="sect"><span class="sx"><svg class="chev"><use href="#chev"/></svg></span><b>控件</b></div>
      <div class="pal p-c">
        <svg viewBox="0 0 36 34"><rect x="1" y="1" width="20" height="13" fill="#eef3ff" stroke="#7f92e8"/><path d="M1 1l10 8L21 1" fill="none" stroke="#7f92e8"/><path d="M21 6l14 26H7z" fill="#ffef00" stroke="#c8b400"/><path d="M19.500 12h4v12h-4zM19.500 26.500h4v4h-4z" fill="#10104e"/></svg>
        <svg viewBox="0 0 36 34"><rect x="1" y="1" width="36" height="31" fill="#eef3ff" stroke="#7f92e8"/><path d="M12 4v23M18 4v23M24 4v23M30 4v23M7 9h29M7 15h29M7 21h29" stroke="#b8c6e8"/><path d="M6 3v25h30" fill="none" stroke="#000" stroke-width="2.500"/><path d="M8 18l6-9 7 2 5-5h10" fill="none" stroke="#c030e0" stroke-width="2"/></svg>
        <svg viewBox="0 0 36 34"><path d="M9 1h26v20H9zM6 4h26v16H6z" fill="#d6f1fb" stroke="#4a9abf"/><path d="M3 8h27v13H3z" fill="#e4f6fd" stroke="#4a9abf"/><path d="M0 20h30v13H0z" fill="#2436e0"/><path d="M30 20l6-6v13l-6 6z" fill="#0d1698"/><path d="M10 23h9v3h-9z" fill="#fff"/></svg>
        <svg viewBox="0 0 36 34"><rect x="1" y="1" width="36" height="31" fill="#eef3ff" stroke="#7f92e8"/><path d="M6 3v25h30" fill="none" stroke="#000" stroke-width="2.500"/><path d="M9 4l3 4 3-4M12 8l-2 4M26 18l5 7M31 18l-5 7" fill="none" stroke="#000" stroke-width="1.600"/><path d="M8 17l6 4 8-9 5 4 9-9" fill="none" stroke="#c030e0" stroke-width="2"/></svg>
        <svg viewBox="0 0 36 34"><rect x="1" y="1" width="34" height="32" fill="#e8ecf5" stroke="#8090b8"/><path d="M5 12l5-9 3 9z" fill="#d01818"/><path d="M15 4h6v8h-6zM24 4h6v8h-6z" fill="#3050d8"/><path d="M5 15h7v7H5zM14 15h7v7h-7zM5 24h7v7H5z" fill="#fff" stroke="#445"/><rect x="14" y="22" width="8" height="8" fill="#f00"/><path d="M26 14l6 14H21z" fill="#111"/></svg>
        <svg viewBox="0 0 36 34"><rect x="1" y="-1" width="36" height="34" fill="#dde5ff" stroke="#7f92e8"/><path d="M4 6h8m3 0h8m3 0h8M4 11h8m3 0h8m3 0h8M4 16h8m3 0h8m3 0h8" stroke="#2c3564" stroke-width="2.500"/><path d="M10 22h26v10H10z" fill="#56627c"/></svg>
      </div>
    </aside>
  </main>
  <div class="wm">CSDN @m0_46266496</div>
</div>
</body>
</html>
```
FILE: styles.css
```css
* { box-sizing: border-box; }
html, body { margin: 0; height: 100%; overflow: hidden; }
body { font: 15px/20px "Noto Sans", "Noto Sans CJK SC", sans-serif; color: #111; }
i, em { font-style: normal; }
.sprite { position: absolute; }
.app { position: relative; width: 1632px; height: 761px; overflow: hidden; display: flex; flex-direction: column; background: #ccc; }
span, b, .opt, .status { white-space: nowrap; }

/* title strip */
.titlebar { height: 9px; flex: none; background: #1c1c1c; border-bottom: 1px solid #444; overflow: hidden; color: #fff; font: 500 16px/20px "Noto Sans", "Noto Sans CJK SC", sans-serif; display: flex; align-items: flex-end; padding: 0 0 1px 11px; }
.titlebar span { flex: none; }
.titlebar .dim { color: #777; font-weight: 400; font-size: 15px; }
.titlebar span:first-child { width: 80px; }
.titlebar .dash { width: 30px; }
.titlebar .t0 { width: 39px; }
.titlebar .t1 { width: 31px; }
.titlebar .t2 { width: 40px; }
.titlebar .t3 { width: 56px; }
.titlebar .t4 { width: 53px; }

/* menu and main toolbar */
.top { height: 63px; flex: none; position: relative; border-bottom: 2px solid #59656c; background: #ccc; }
.menu { display: grid; grid-template-columns: 68px 70px 70px 65px 72px 72px 68px 72px 60px; margin-left: -10px; height: 31px; padding-top: 6px; }
.menu span { letter-spacing: -.3px; }
.menu u { text-underline-offset: 2px; }
.brand { position: absolute; left: 1588px; top: 16px; font-size: 16px; letter-spacing: 1px; }
.bar { display: flex; align-items: center; }
.main { height: 29px; }
.ic { width: 20px; height: 20px; flex: none; }
.first { margin-left: -7px; }
.dd { width: 10px; height: 14px; flex: none; color: #000; }
.off { color: #888; }
.sep { width: 1px; height: 29px; flex: none; background: repeating-linear-gradient(#888 0 2px, transparent 2px 3px); }
.m3 { margin-left: 3px; } .m4 { margin-left: 4px; } .m5 { margin-left: 5px; } .m6 { margin-left: 6px; }
.m7 { margin-left: 7px; } .m8 { margin-left: 8px; } .m9 { margin-left: 9px; } .m10 { margin-left: 10px; } .m11 { margin-left: 11px; }
.lbl { flex: none; font-size: 15.900px; }
.save { width: 69px; }
.on { width: 64px; }
.offl { width: 65px; color: #8c8c8c; }
.hot { position: relative; width: 20px; height: 20px; flex: none; box-shadow: 0 0 0 3px #e2e2e2; background: #e2e2e2; }
.hot .ic { display: block; }
.ring { position: absolute; left: -11px; top: -12px; width: 42px; height: 41px; border: 3px solid #ff1e10; border-radius: 50%; }
.search { width: 150px; height: 22px; margin-top: 4px; flex: none; border: 2px solid #999; background: #fff; color: #777; padding-left: 4px; line-height: 19px; font-size: 14.900px; }

/* columns */
.work { flex: 1; min-height: 0; display: grid; grid-template-columns: 5px 412px 4px 1120px 4px 87px; }
.work > * { min-width: 0; min-height: 0; }
.edge { background: #b3b3b3; border-right: 1px solid #2d344d; }
.vdark { background: #1c2235; }
.tree-panel, .center, .toolbox { display: flex; flex-direction: column; overflow: hidden; }
.tree-panel > *, .center > *, .toolbox > * { flex: none; }
.phead { height: 30px; display: flex; align-items: center; color: #fff; }
.navy { background: #2d344d; padding-left: 7px; }
.phead b { font-size: 19px; font-weight: 500; -webkit-text-stroke: .3px #fff; margin-top: -1px; }
.pcol { margin-left: 304px; width: 14px; height: 14px; border: 2px solid #fff; border-right: 0; background: linear-gradient(90deg, #2d344d 0 5px, #ddd 5px 6px, #2d344d 6px 8px, #aaa 8px 10px, #2d344d 10px 11px, #777 11px); }
.pleft { margin-left: 13px; border: 8px solid transparent; border-right-color: #fff; border-left: 0; }
.hl { height: 4px; background: #efefef; }
.tabs { height: 31px; background: #cacaca; border-bottom: 1px solid #888; padding: 4px 0 0 7px; }
.tab { display: block; width: 79px; height: 27px; border: 1px solid #888; border-bottom: 0; background: linear-gradient(#fff, #ebebeb); font: 700 18px/22px "Noto Sans CJK SC", sans-serif; padding-left: 14px; }
.sub { height: 34px; background: #ebebeb; }
.push { margin-left: auto; margin-right: 5px; }
.sub > .ic:last-child { margin-right: 11px; }
.frame { width: 28px; height: 27px; border: 1px solid #3f78d8; border-radius: 2px; background: #fff; display: grid; place-items: center; flex: none; }
.blank { height: 26px; background: #c1c1c1; }

/* project tree */
.treebox { height: 543px; display: grid; grid-template-columns: 389px 23px; overflow: hidden; }
.tree { overflow: hidden; background: #efefef; }
.row { height: 23.750px; display: grid; grid-template-columns: 364px 25px; border-bottom: 1px solid #fff; background: linear-gradient(90deg, transparent 364px, #d0d0d0 364px 365px, #fff 365px 366px, transparent 366px) #efefef; }
.row > div { display: flex; align-items: center; }
.row .ic { margin: 0 5px 0 4px; }
.l0 { padding-left: 3px; } .l1 { padding-left: 26px; } .l2 { padding-left: 48px; } .l3 { padding-left: 71px; }
.row .ar { width: 16px; flex: none; }
.row svg.d { height: 7px; }
.row svg.r { height: 11px; }
.hd { background-color: #e1e1e1; }
.sel { background: linear-gradient(90deg, #b1bfdc 364px, #becbe8 364px); position: relative; }
.sel::after { content: ""; position: absolute; left: 0; top: 0; width: 366px; height: 22.500px; border: 1px dashed #3a62d8; }
.row em { letter-spacing: -.6px; }
.en { font-size: 14px; font-weight: 500; }
.hmi { letter-spacing: .4px; }

.sb { background: #c1c1c1; display: flex; flex-direction: column; align-items: center; }
.sbtn { width: 21px; height: 22px; border: 1px solid #888; background: #e8e8e8; box-shadow: inset 0 0 0 1px #fff; display: grid; place-items: center; flex: none; }
.end { margin-top: auto; }
.thumb { width: 21px; border: 1px solid #888; background: linear-gradient(90deg, #eee, #d4d4d4); box-shadow: inset 0 0 0 1px #fff; display: grid; place-items: center; }
.thumb i { width: 10px; height: 10px; background: repeating-linear-gradient(#666 0 1px, #eee 1px 3px); }
.chev { width: 12px; height: 8px; color: #555; }
.chev.up { transform: rotate(180deg); }
.sb-tree { padding: 1px 0 1px; }
.sb-tree .thumb { height: 201px; margin-top: 1px; }
.dark3 { height: 3px; background: #1c2235; }
.sect { height: 30px; border-top: 3px solid #9e9e9e; border-bottom: 1px solid #888; background: linear-gradient(#f4f4f4, #d2d2d2); display: flex; }
.sx { width: 26px; flex: none; border-right: 1px solid #888; display: grid; place-items: center; }
.sect .chev { color: #111; }
.sect b { font: 700 18px/26px "Noto Sans CJK SC", sans-serif; padding-left: 5px; }
.detail { border-top-width: 0; height: 27px; padding-top: 0; }
.detail b { line-height: 25px; }

/* editor */
.grey { background: #b0b0b0; }
.crumbs { padding-left: 7px; position: relative; font-size: 17.500px; }
.crumbs span { color: #fff; }
.crumbs i { border: 5px solid transparent; border-left: 6px solid #fff; border-right: 0; margin: 0 12px 0 12px; }
.c1 { width: 48px; }
.c2 { width: 190px; }
.crumbs i + .c3 { margin-left: 1px; margin-right: 2px; }
.c3 { font-weight: 700; font-size: 18.300px; }
.winbtn { width: 84px; height: 16px; margin-left: auto; margin-right: 5px; }
.strip { height: 31px; background: #cbcbcb; border-bottom: 1px solid #888; }
.fmt { height: 34px; background: #ebebeb; }
.fcombo { width: 140px; height: 22px; border: 1px solid #888; flex: none; display: flex; justify-content: flex-end; background: #e8e8e8; }
.fcombo i { width: 22px; border-left: 1px solid #888; background: linear-gradient(90deg, transparent 2px, #f4f4f4 2px 3px, transparent 3px) center / 9px 11px no-repeat, repeating-linear-gradient(#555 0 1px, #f4f4f4 1px 3px) center / 9px 11px no-repeat, linear-gradient(#fff, #ccc); }
.scombo { width: 47px; height: 22px; border: 1px solid #888; flex: none; display: flex; justify-content: flex-end; }
.scombo i { width: 20px; border-left: 1px solid #888; display: grid; place-items: center; background: linear-gradient(#fafafa, #d4d4d4); }
.scombo i::after { content: ""; border: 5px solid transparent; border-top: 6px solid #888; border-bottom: 0; }
.g { width: 20px; flex: none; text-align: center; color: #555; font: 700 19px/22px "Noto Sans", sans-serif; }
.it { font-family: "Liberation Serif", serif; font-style: italic; font-weight: 700; }
.un { text-decoration: underline; font-weight: 500; text-underline-offset: 3px; }
.st { text-decoration: line-through; font-weight: 500; }
.up { font-weight: 600; text-align: left; position: relative; }
.up sup { position: absolute; left: 11px; top: -7px; font: 13px/16px "DejaVu Sans", sans-serif; }

.canvas { height: 368px; display: grid; grid-template-columns: 1099px 21px; }
.scene { width: 1099px; height: 368px; display: block; }
.sb-can { padding-top: 1px; }
.sb-can .thumb { height: 160px; margin-top: 66px; }
.siemens { font: 800 16px "Noto Sans", sans-serif; fill: #12a3a3; }
.simatic { font: 500 15.500px "Noto Sans", sans-serif; fill: #222; }
.rootname { font: 23px "Noto Sans CJK SC", sans-serif; fill: #55556c; }
.clock { font: 16px "Liberation Mono", monospace; fill: #222; }
.touch { font: 500 61px "Noto Sans", sans-serif; fill: #000; }
.io { font: 700 12px "Noto Sans", sans-serif; fill: #33334a; }
.welcome { font: 700 13px "Liberation Mono", "Noto Sans CJK SC", monospace; fill: #000; }

.zoombar { height: 24px; background: #ebebeb; display: flex; }
.zfill { width: 773px; background: #dedede; margin-right: 7px; }
.zcombo { width: 195px; height: 22px; border: 2px solid #999; background: #fff; font-size: 14px; line-height: 18px; padding-left: 2px; display: flex; justify-content: space-between; flex: none; letter-spacing: .4px; }
.zcombo i, .mcombo i { width: 20px; border-left: 1px solid #888; background: linear-gradient(#f6f6f6, #c6c6c6); display: grid; place-items: center; }
.tri { width: 10px; height: 6px; flex: none; }
.slider { width: 84px; height: 22px; margin-left: 22px; }
.fit { margin-left: auto; width: 21px; background: #fff; padding: 1px 2px; }
.fit svg { width: 17px; height: 17px; display: block; }
.dark4 { height: 4px; background: #1c2235; margin-top: -1px; }

/* inspector */
.itabs { height: 30px; background: #b0b0b0; display: flex; align-items: flex-end; padding-left: 738px; }
.itab { height: 26px; border: 1px solid #777; border-bottom: 0; background: linear-gradient(#c8c8c8, #e4e4e4); display: flex; align-items: center; color: #666; flex: none; }
.itab b, .stab { font: 700 18px/22px "Noto Sans CJK SC", sans-serif; }
.itab b { font-weight: 500; margin-top: -2px; }
.itab .ic { margin: 0 4px 0 2px; }
.itab.a { width: 94px; margin-right: 1px; }
.itab.b { width: 101px; margin-right: 1px; }
.itab.c { width: 94px; }
.itab.c .ic { margin-right: 5px; }
.itab.act { background: #efefef; color: #000; border-top-color: #efefef; }
.itab.act b { font-weight: 700; }
.itab .yi { margin-left: 15px; }
.yi { width: 17px; height: 17px; flex: none; }
.wb2 { width: 62px; height: 16px; margin: 0 0 7px 25px; }
.hl3 { height: 3px; background: #efefef; }
.stabs { height: 31px; background: linear-gradient(#cfcfcf, #c8c8c8); border-bottom: 1px solid #777; display: flex; align-items: flex-end; padding-left: 8px; }
.stab { height: 26px; border: 1px solid #777; border-right-width: 2px; border-bottom: 0; background: linear-gradient(#e8e8e8, #d2d2d2); color: #666; display: flex; align-items: center; padding: 0 0 2px 13px; margin-right: 1px; font-weight: 500; flex: none; }
.s1 { width: 89px; } .s2 { width: 119px; } .s3 { width: 78px; }
.s1 .yi { margin: 2px 0 0 15px; }
.stab.act { background: #ebebeb; color: #000; font-weight: 700; margin-bottom: -1px; height: 27px; border-right-width: 1px; }
.filt { height: 35px; background: #ebebeb; padding-left: 5px; gap: 2px; }
.mcombo { margin-left: 3px; width: 250px; height: 23px; margin-top: 2px; border: 2px solid #999; background: #fff; display: flex; justify-content: space-between; padding-left: 4px; font-size: 16.200px; line-height: 19px; }
.status { height: 25px; background: #efefef; line-height: 24px; padding-left: 15px; }
.tr { height: 24px; display: grid; grid-template-columns: 36px 247px 439px 64px 63px 66px 88px 100px 17px; background: #efefef; border-bottom: 1px solid #fff; line-height: 23px; }
.tr > span { padding-left: 5px; overflow: hidden; font-size: 14.500px; }
.tr > .desc { letter-spacing: .29px; }
.th { background: linear-gradient(#f6f8fa, #dde2ea 55%, #e8ecf0); border-top: 1px solid #aaa; }
.tr.th > span { border-right: 1px solid #aaa; font-size: 15.500px; line-height: 22px; }
.tr.th > span:last-child { background: #dcdcdc; border-right: 0; }
.tr.th .ex { padding-left: 8px; color: #3a70a8; font-size: 14px; }
.r1 { background: #e1e1e1; }
.lst { background: #efefef; }
.tr > .ci { padding: 2px 0 0 8px; }
.tr > .p1 { padding-left: 7px; display: flex; align-items: center; gap: 13px; font-size: 14px; }
.tr > .p2 { padding-left: 29px; display: flex; align-items: center; gap: 12px; }
.tr > .cg { padding: 4px 0 0 22px; }
.go { width: 16px; height: 16px; display: block; }
.tr > .tm { padding-left: 6px; font-size: 14.500px; letter-spacing: .45px; }

/* toolbox */
.tbh { padding-left: 7px; }
.opt { height: 31px; border-bottom: 1px solid #888; background: linear-gradient(#e4e4e4, #fff 30%, #dcdcdc); font: 700 18px/27px "Noto Sans CJK SC", sans-serif; padding-left: 7px; }
.tools { height: 34px; background: #ebebeb; padding-left: 9px; }
.pal { background: #efefef; display: grid; grid-template-columns: 36px 36px; column-gap: 17px; align-content: start; padding-left: 7px; overflow: hidden; }
.pal svg { width: 36px; display: block; }
.p-a { height: 187px; padding-top: 7px; row-gap: 9px; }
.p-a svg { height: 36px; }
.p-b { height: 188px; padding-top: 8px; row-gap: 11px; }
.p-b svg, .p-c svg { height: 34px; }
.p-c { height: 126px; padding-top: 9px; row-gap: 11px; }

.wm { position: absolute; left: 1441px; top: 732px; font: 18px/22px "Noto Sans", sans-serif; color: rgba(120, 120, 120, .85); text-shadow: 1px 1px 0 rgba(255, 255, 255, .7); letter-spacing: -.15px; white-space: nowrap; }
```
